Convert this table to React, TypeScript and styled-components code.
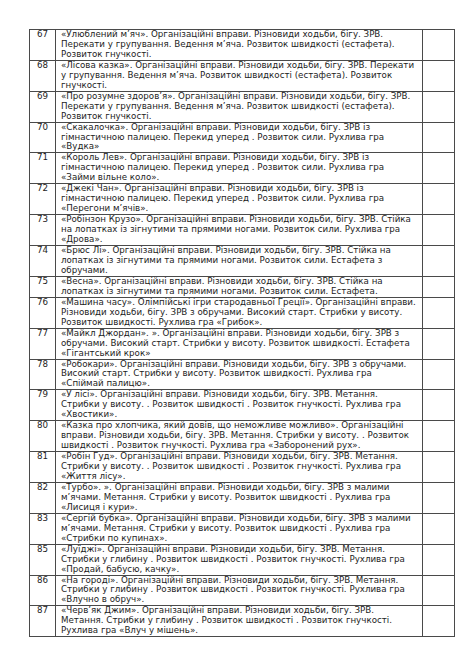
import styled, { createGlobalStyle } from "styled-components";

interface Lesson {
  num: number;
  lines: string[];
}

const lessons: Lesson[] = [
  { num: 67, lines: ["«Улюблений м’яч». Організаційні вправи. Різновиди ходьби, бігу. ЗРВ.", "Перекати у групування. Ведення м’яча. Розвиток швидкості (естафета).", "Розвиток гнучкості."] },
  { num: 68, lines: ["«Лісова казка». Організаційні вправи. Різновиди ходьби, бігу. ЗРВ. Перекати", "у групування. Ведення м’яча. Розвиток швидкості (естафета). Розвиток", "гнучкості."] },
  { num: 69, lines: ["«Про розумне здоров’я». Організаційні вправи. Різновиди ходьби, бігу. ЗРВ.", "Перекати у групування. Ведення м’яча. Розвиток швидкості (естафета).", "Розвиток гнучкості."] },
  { num: 70, lines: ["«Скакалочка». Організаційні вправи. Різновиди ходьби, бігу. ЗРВ із", "гімнастичною палицею. Перекид уперед . Розвиток сили. Рухлива гра", "«Вудка»"] },
  { num: 71, lines: ["«Король Лев». Організаційні вправи. Різновиди ходьби, бігу. ЗРВ із", "гімнастичною палицею. Перекид уперед . Розвиток сили. Рухлива гра", "«Займи вільне коло»."] },
  { num: 72, lines: ["«Джекі Чан». Організаційні вправи. Різновиди ходьби, бігу. ЗРВ із", "гімнастичною палицею. Перекид уперед . Розвиток сили. Рухлива гра", "«Перегони м’ячів»."] },
  { num: 73, lines: ["«Робінзон Крузо». Організаційні вправи. Різновиди ходьби, бігу. ЗРВ. Стійка", "на лопатках із зігнутими та прямими ногами. Розвиток сили. Рухлива гра", "«Дрова»."] },
  { num: 74, lines: ["«Брюс Лі». Організаційні вправи. Різновиди ходьби, бігу. ЗРВ. Стійка на", "лопатках із зігнутими та прямими ногами. Розвиток сили. Естафета з", "обручами."] },
  { num: 75, lines: ["«Весна». Організаційні вправи. Різновиди ходьби, бігу. ЗРВ. Стійка на", "лопатках із зігнутими та прямими ногами. Розвиток сили. Естафета."] },
  { num: 76, lines: ["«Машина часу». Олімпійські ігри стародавньої Греції». Організаційні вправи.", "Різновиди ходьби, бігу. ЗРВ з обручами. Високий старт. Стрибки у висоту.", "Розвиток швидкості. Рухлива гра «Грибок»."] },
  { num: 77, lines: ["«Майкл Джордан». ». Організаційні вправи. Різновиди ходьби, бігу. ЗРВ з", "обручами. Високий старт. Стрибки у висоту. Розвиток швидкості. Естафета", "«Гігантський крок»"] },
  { num: 78, lines: ["«Робокари». Організаційні вправи. Різновиди ходьби, бігу. ЗРВ з обручами.", "Високий старт. Стрибки у висоту. Розвиток швидкості. Рухлива гра", "«Спіймай палицю»."] },
  { num: 79, lines: ["«У лісі». Організаційні вправи. Різновиди ходьби, бігу. ЗРВ. Метання.", "Стрибки у висоту. . Розвиток швидкості . Розвиток гнучкості. Рухлива гра", "«Хвостики»."] },
  { num: 80, lines: ["«Казка про хлопчика, який довів, що неможливе можливо». Організаційні", "вправи. Різновиди ходьби, бігу. ЗРВ. Метання. Стрибки у висоту. . Розвиток", "швидкості . Розвиток гнучкості. Рухлива гра «Заборонений рух»."] },
  { num: 81, lines: ["«Робін Гуд». Організаційні вправи. Різновиди ходьби, бігу. ЗРВ. Метання.", "Стрибки у висоту. . Розвиток швидкості . Розвиток гнучкості. Рухлива гра", "«Життя лісу»."] },
  { num: 82, lines: ["«Турбо». ». Організаційні вправи. Різновиди ходьби, бігу. ЗРВ з малими", "м’ячами. Метання. Стрибки у висоту. Розвиток швидкості . Рухлива гра", "«Лисиця і кури»."] },
  { num: 83, lines: ["«Сергій бубка». Організаційні вправи. Різновиди ходьби, бігу. ЗРВ з малими", "м’ячами. Метання. Стрибки у висоту. Розвиток швидкості . Рухлива гра", "«Стрибки по купинах»."] },
  { num: 85, lines: ["«Луїджі». Організаційні вправи. Різновиди ходьби, бігу. ЗРВ. Метання.", "Стрибки у глибину . Розвиток швидкості . Розвиток гнучкості. Рухлива гра", "«Продай, бабусю, качку»."] },
  { num: 86, lines: ["«На городі». Організаційні вправи. Різновиди ходьби, бігу. ЗРВ. Метання.", "Стрибки у глибину . Розвиток швидкості . Розвиток гнучкості. Рухлива гра", "«Влучно в обруч»."] },
  { num: 87, lines: ["«Черв’як Джим». Організаційні вправи. Різновиди ходьби, бігу. ЗРВ.", "Метання. Стрибки у глибину . Розвиток швидкості . Розвиток гнучкості.", "Рухлива гра «Влуч у мішень»."] },
];

const GlobalStyle = createGlobalStyle`
  html, body {
    margin: 0;
    padding: 0;
    background: #ffffff;
  }
`;

function App() {
  return (
    <Page>
      <GlobalStyle />
      <Table>
        <colgroup>
          <col style={{ width: 26 }} />
          <col style={{ width: 367 }} />
          <col style={{ width: 32 }} />
        </colgroup>
        <tbody>
          {lessons.map((lesson) => (
            <tr key={lesson.num}>
              <NumCell>{lesson.num}</NumCell>
              <TextCell>
                {lesson.lines.map((line, i) => (
                  <Line key={i}>{line}</Line>
                ))}
              </TextCell>
              <EmptyCell />
            </tr>
          ))}
        </tbody>
      </Table>
    </Page>
  );
}

const Page = styled.div`
  width: 474px;
  height: 670px;
  padding: 29px 0 0 29px;
  box-sizing: border-box;
  font-family: "DejaVu Sans", "Noto Sans", sans-serif;
  font-size: 8.7px;
  line-height: 9.95px;
  color: #1c1c1c;
`;

const Table = styled.table`
  width: 425px;
  border-collapse: collapse;
  table-layout: fixed;
`;

const Cell = styled.td`
  border: 1px solid #4a4a4a;
  padding: 0;
  vertical-align: top;
`;

const NumCell = styled(Cell)`
  text-align: center;
`;

const TextCell = styled(Cell)`
  padding-left: 5px;
`;

const EmptyCell = styled(Cell)``;

const Line = styled.div`
  white-space: nowrap;
`;

export default App;
